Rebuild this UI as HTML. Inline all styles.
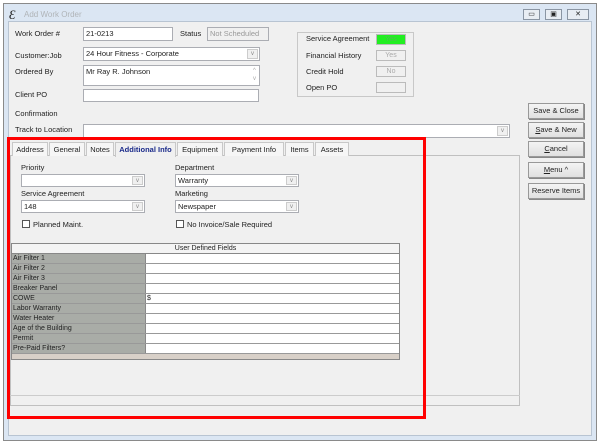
<!DOCTYPE html>
<html><head><style>
*{box-sizing:border-box}
body{margin:0;width:600px;height:445px;background:#fff;font-family:"Liberation Sans",sans-serif;font-size:7.5px;color:#222;position:relative;overflow:hidden}
.a{position:absolute}
.in{position:absolute;background:#fff;border:1px solid #abadb3;padding:1px 2px;font-size:7.5px;white-space:nowrap}
.dd{position:absolute;right:1px;top:1px;bottom:1px;width:11px;border:1px solid #ccc;background:#f0f0f0;color:#888;font-size:6px;text-align:center;line-height:9px}
.btn{position:absolute;left:528px;width:56px;height:16px;border:1px solid #999;background:linear-gradient(#f4f4f4,#e0e0e0);text-align:center;line-height:14px;font-size:7.5px;box-shadow:1px 1px 0 #888}
.tab{position:absolute;top:142px;height:14px;border:1px solid #c8c8c8;border-bottom:none;background:#f6f6f6;text-align:center;line-height:13px;font-size:7.5px}
.row{height:10px;border-bottom:1px solid #999;display:flex}
.row div:first-child{width:134px;background:#a9aca7;padding-left:1px;line-height:9px;font-size:7px;border-right:1px solid #888}
.row div:last-child{flex:1;background:#fff;line-height:9px;padding-left:1px;font-size:7px}
.cb{position:absolute;width:8px;height:8px;border:1px solid #555;background:#fff}
.sv{position:absolute;left:376px;width:30px;height:11px;border:1px solid #bbb;color:#aaa;text-align:center;line-height:9px;font-size:7px}
</style></head><body>
<div class="a" style="left:3px;top:3px;width:594px;height:438px;background:#dbe6f3;border:1px solid #8a8a8a"></div>
<div class="a" style="left:8px;top:21px;width:584px;height:415px;background:#f0f0f0;border:1px solid #b8c4d2"></div>
<div class="a" style="left:9px;top:7px;font-size:13px;font-style:italic;font-family:'Liberation Serif',serif">&#400;</div>
<div class="a" style="left:24px;top:10px;color:#b0b4b8;font-size:8px">Add Work Order</div>
<div class="a" style="left:523px;top:9px;width:17px;height:11px;border:1px solid #8a95a3;background:#e8edf3;font-size:7px;text-align:center;line-height:9px">▭</div>
<div class="a" style="left:545px;top:9px;width:17px;height:11px;border:1px solid #8a95a3;background:#e8edf3;font-size:7px;text-align:center;line-height:9px">▣</div>
<div class="a" style="left:567px;top:9px;width:22px;height:11px;border:1px solid #8a95a3;background:#e8edf3;font-size:7px;text-align:center;line-height:9px">✕</div>

<div class="a" style="left:15px;top:29px">Work Order #</div>
<div class="in" style="left:83px;top:27px;width:90px;height:14px">21-0213</div>
<div class="a" style="left:180px;top:29px">Status</div>
<div class="in" style="left:207px;top:27px;width:62px;height:14px;background:#f0f0f0;color:#999">Not Scheduled</div>
<div class="a" style="left:15px;top:51px">Customer:Job</div>
<div class="in" style="left:83px;top:47px;width:177px;height:14px">24 Hour Fitness - Corporate<div class="dd">v</div></div>
<div class="a" style="left:15px;top:67px">Ordered By</div>
<div class="in" style="left:83px;top:65px;width:177px;height:21px">Mr Ray R. Johnson<div class="a" style="right:3px;top:1px;color:#aaa;font-size:6px;line-height:8px">^<br>v</div></div>
<div class="a" style="left:15px;top:90px">Client PO</div>
<div class="in" style="left:83px;top:89px;width:176px;height:13px"></div>
<div class="a" style="left:15px;top:109px">Confirmation</div>
<div class="a" style="left:15px;top:125px">Track to Location</div>
<div class="in" style="left:83px;top:124px;width:427px;height:14px"><div class="dd">v</div></div>

<div class="a" style="left:297px;top:32px;width:117px;height:65px;border:1px solid #c8c8c8"></div>
<div class="a" style="left:306px;top:34px">Service Agreement</div>
<div class="sv" style="top:34px;background:#22ee22;color:#5b5">Yes</div>
<div class="a" style="left:306px;top:51px">Financial History</div>
<div class="sv" style="top:50px">Yes</div>
<div class="a" style="left:306px;top:67px">Credit Hold</div>
<div class="sv" style="top:66px">No</div>
<div class="a" style="left:306px;top:83px">Open PO</div>
<div class="sv" style="top:82px"></div>

<div class="btn" style="top:103px">Save &amp; Close</div>
<div class="btn" style="top:122px"><u>S</u>ave &amp; New</div>
<div class="btn" style="top:141px"><u>C</u>ancel</div>
<div class="btn" style="top:162px"><u>M</u>enu ^</div>
<div class="btn" style="top:183px">Reserve Items</div>

<div class="a" style="left:10px;top:155px;width:510px;height:251px;border:1px solid #c0c0c0;background:#f0f0f0"></div>
<div class="a" style="left:10px;top:395px;width:510px;height:1px;background:#ccc"></div>
<div class="tab" style="left:12px;width:36px">Address</div>
<div class="tab" style="left:49px;width:36px">General</div>
<div class="tab" style="left:86px;width:28px">Notes</div>
<div class="tab" style="left:115px;width:61px;background:#f0f0f0;color:#1a2a8a;font-weight:bold;height:15px">Additional Info</div>
<div class="tab" style="left:177px;width:46px">Equipment</div>
<div class="tab" style="left:224px;width:60px">Payment Info</div>
<div class="tab" style="left:285px;width:29px">Items</div>
<div class="tab" style="left:315px;width:34px">Assets</div>

<div class="a" style="left:21px;top:163px">Priority</div>
<div class="in" style="left:21px;top:174px;width:124px;height:13px"><div class="dd">v</div></div>
<div class="a" style="left:175px;top:163px">Department</div>
<div class="in" style="left:175px;top:174px;width:124px;height:13px">Warranty<div class="dd">v</div></div>
<div class="a" style="left:21px;top:189px">Service Agreement</div>
<div class="in" style="left:21px;top:200px;width:124px;height:13px">148<div class="dd">v</div></div>
<div class="a" style="left:175px;top:189px">Marketing</div>
<div class="in" style="left:175px;top:200px;width:124px;height:13px">Newspaper<div class="dd">v</div></div>
<div class="cb" style="left:22px;top:220px"></div><div class="a" style="left:33px;top:220px">Planned Maint.</div>
<div class="cb" style="left:176px;top:220px"></div><div class="a" style="left:187px;top:220px">No Invoice/Sale Required</div>

<div class="a" style="left:11px;top:243px;width:389px;height:117px;border:1px solid #888;background:#d8d0c8">
<div style="height:10px;background:#f4f4f4;border-bottom:1px solid #888;text-align:center;font-size:7px;line-height:9px">User Defined Fields</div>
<div class="row"><div>Air Filter 1</div><div></div></div>
<div class="row"><div>Air Filter 2</div><div></div></div>
<div class="row"><div>Air Filter 3</div><div></div></div>
<div class="row"><div>Breaker Panel</div><div></div></div>
<div class="row"><div>COWE</div><div>$</div></div>
<div class="row"><div>Labor Warranty</div><div></div></div>
<div class="row"><div>Water Heater</div><div></div></div>
<div class="row"><div>Age of the Building</div><div></div></div>
<div class="row"><div>Permit</div><div></div></div>
<div class="row"><div>Pre-Paid Filters?</div><div></div></div>
</div>

<div class="a" style="left:7px;top:137px;width:419px;height:282px;border:3px solid #f00"></div>
</body></html>
